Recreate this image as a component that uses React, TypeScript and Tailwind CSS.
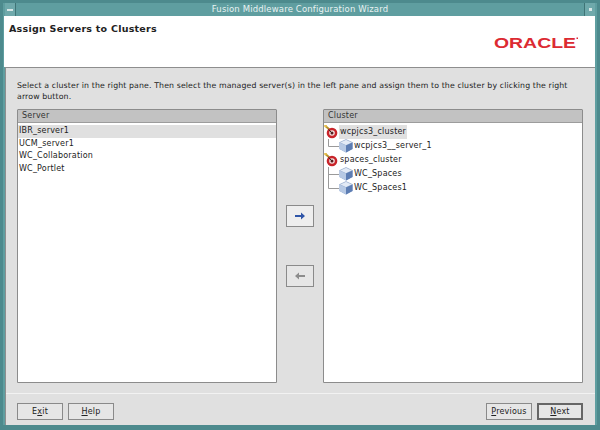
import React from "react";

const font = "font-['DejaVu_Sans',sans-serif]";

const ClusterIcon = () => (
  <svg width="15" height="14" viewBox="0 0 15 14" className="shrink-0">
    <path d="M1.5 1 L7 6" stroke="#b8902c" strokeWidth="2" />
    <circle cx="1.5" cy="1" r="1.4" fill="#e6c04a" />
    <circle cx="8" cy="8" r="5.3" fill="#c8242a" />
    <circle cx="8" cy="8" r="2.8" fill="#f3e4e2" />
    <circle cx="8" cy="8" r="1.5" fill="#5a1a1e" />
    <path d="M4.5 4.5 L8 8" stroke="#3a2a20" strokeWidth="1" />
  </svg>
);

const ServerIcon = () => (
  <svg width="14" height="14" viewBox="0 0 14 14" className="shrink-0">
    <path d="M7 0.5 L13.5 3.5 L13.5 10 L7 13.5 L0.5 10 L0.5 3.5 Z" fill="#7f9cc9" />
    <path d="M7 0.5 L13.5 3.5 L7 6.5 L0.5 3.5 Z" fill="#e4ebf6" stroke="#8aa0c4" strokeWidth="0.5" />
    <path d="M0.5 3.5 L7 6.5 L7 13.5 L0.5 10 Z" fill="#b7c9e4" />
    <path d="M7 6.5 L13.5 3.5 L13.5 10 L7 13.5 Z" fill="#5d7db3" />
  </svg>
);

const TreeLine = ({ last }: { last: boolean }) => (
  <svg width="15" height="14" viewBox="0 0 15 14" className="shrink-0">
    <path d={last ? "M4.5 0 V7.5 H15" : "M4.5 0 V14 M4.5 7.5 H15"} stroke="#9a9a9a" strokeWidth="1" fill="none" />
  </svg>
);

const servers = ["IBR_server1", "UCM_server1", "WC_Collaboration", "WC_Portlet"];

const clusters = [
  { name: "wcpjcs3_cluster", selected: true, members: ["wcpjcs3__server_1"] },
  { name: "spaces_cluster", selected: false, members: ["WC_Spaces", "WC_Spaces1"] },
];

const WizardButton = ({ label, hot, strong }: { label: string; hot: number; strong?: boolean }) => (
  <button
    className={`h-[17px] w-[46px] bg-[#e6e6e6] text-[8px] leading-none tracking-[0.2px] text-[#222] ${
      strong ? "border-2 border-[#666]" : "border border-[#8a8a8a]"
    }`}
  >
    {label.slice(0, hot)}
    <span className="underline">{label[hot]}</span>
    {label.slice(hot + 1)}
  </button>
);

const Pane = ({ title, children }: { title: string; children: React.ReactNode }) => (
  <div className="w-[260px] h-[274px] flex flex-col border border-[#8c8c8c] bg-white rounded-t-[1px]">
    <div className="h-[13px] bg-[#c2c2c2] border-b border-[#9c9c9c] pl-[4px] text-[8px] leading-[12px] tracking-[0.2px] text-[#333]">
      {title}
    </div>
    <div className="flex-1 pt-[2px]">{children}</div>
  </div>
);

export default function App() {
  return (
    <div className={`w-[600px] h-[430px] flex flex-col bg-[#5f9ea0] border-[3px] border-b-[5px] border-[#4d8a8d] overflow-hidden ${font}`}>
      {/* Barra de titulo */}
      <div className="h-[13px] flex items-center shrink-0 px-[2px]">
        <div className="w-[11px] h-[13px] bg-[#6fa9ab] border-r border-[#3f7476] flex items-center justify-center">
          <div className="w-[6px] h-[2px] bg-[#d7e6e6]" />
        </div>
        <div className="flex-1 text-center text-[8.5px] leading-none tracking-[0.15px] text-[#e8f2f2]">
          Fusion Middleware Configuration Wizard
        </div>
        <div className="w-[11px] h-[13px] bg-[#6fa9ab] border-l border-[#3f7476] flex items-center justify-center">
          <div className="w-[3px] h-[3px] bg-[#d7e6e6]" />
        </div>
      </div>

      {/* Cabecera */}
      <div className="h-[51px] shrink-0 bg-white pl-[5px] pr-[15px] flex justify-between ml-[1px] mr-[2px]">
        <div className="pt-[6px] text-[9.5px] leading-[14px] font-bold tracking-[0.25px] text-[#222]">
          Assign Servers to Clusters
        </div>
        <svg width="86" height="14" viewBox="0 0 86 14" className="mt-[20px]">
          <text
            x="0"
            y="11.5"
            textLength="82"
            lengthAdjust="spacingAndGlyphs"
            fill="#dc2a32"
            fontSize="14"
            fontWeight="700"
            fontFamily="'Liberation Sans', sans-serif"
          >
            ORACLE
          </text>
          <rect x="82.5" y="1.5" width="1.5" height="1.5" fill="#dc2a32" />
        </svg>
      </div>

      {/* Contenido */}
      <div className="flex-1 flex flex-col bg-[#e0e0e0] ml-[2px] mr-[2px] border-t border-l border-[#8e8e8e] px-[11px] pt-[12px]">
        <p className="w-[566px] text-[7.8px] leading-[11px] tracking-[0.12px] text-[#222]">
          Select a cluster in the right pane. Then select the managed server(s) in the left pane and assign them to the cluster by clicking the right arrow button.
        </p>

        <div className="mt-[7px] flex justify-between w-[566px]">
          <Pane title="Server">
            {servers.map((s, i) => (
              <div
                key={s}
                className={`h-[12.5px] pl-[1px] text-[8px] leading-[12.5px] tracking-[0.2px] text-[#222] ${i === 0 ? "bg-[#e0e0e0]" : ""}`}
              >
                {s}
              </div>
            ))}
          </Pane>

          <div className="flex flex-col items-center pt-[96px] gap-[38px]">
            <button className="w-[28px] h-[22px] bg-[#eeeeee] border border-[#8a8a8a] flex items-center justify-center">
              <svg width="10" height="8" viewBox="0 0 10 8">
                <path d="M0 3 H6 V0.5 L10 4 L6 7.5 V5 H0 Z" fill="#2f55a8" />
              </svg>
            </button>
            <button className="w-[28px] h-[22px] bg-[#e6e6e6] border border-[#8a8a8a] flex items-center justify-center">
              <svg width="10" height="8" viewBox="0 0 10 8">
                <path d="M10 3 H4 V0.5 L0 4 L4 7.5 V5 H10 Z" fill="#8c8c8c" />
              </svg>
            </button>
          </div>

          <Pane title="Cluster">
            {clusters.map((c) => (
              <div key={c.name}>
                <div className="h-[14px] flex items-center">
                  <ClusterIcon />
                  <span className={`h-[14px] px-[1px] text-[8px] leading-[14px] tracking-[0.2px] text-[#222] ${c.selected ? "bg-[#e0e0e0]" : ""}`}>
                    {c.name}
                  </span>
                </div>
                {c.members.map((m, i) => (
                  <div key={m} className="h-[14px] flex items-center">
                    <TreeLine last={i === c.members.length - 1} />
                    <ServerIcon />
                    <span className="pl-[1px] text-[8px] leading-[14px] tracking-[0.2px] text-[#222]">{m}</span>
                  </div>
                ))}
              </div>
            ))}
          </Pane>
        </div>

        <div className="mt-[10px] -mx-[11px] border-t border-[#f2f2f2]" />

        <div className="mt-[9px] flex justify-between w-[566px]">
          <div className="flex gap-[5px]">
            <WizardButton label="Exit" hot={1} />
            <WizardButton label="Help" hot={0} />
          </div>
          <div className="flex gap-[5px]">
            <WizardButton label="Previous" hot={0} />
            <WizardButton label="Next" hot={0} strong />
          </div>
        </div>
      </div>
    </div>
  );
}
